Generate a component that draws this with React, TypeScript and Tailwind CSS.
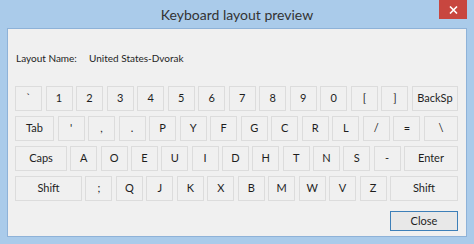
import React from "react";

type K = { label: string; w: number };

const k = (label: string, w = 27): K => ({ label, w });

const rows: K[][] = [
  [..."`1234567890[]".split("").map((c) => k(c)), k("BackSp", 46)],
  [k("Tab", 39), ..."',.PYFGCRL/=".split("").map((c) => k(c)), k("\\", 34)],
  [k("Caps", 52), ..."AOEUIDHTNS-".split("").map((c) => k(c)), k("Enter", 54)],
  [k("Shift", 67), ...";QJKXBMWVZ".split("").map((c) => k(c)), k("Shift", 68)],
];

function Key({ label, w }: K) {
  return (
    <div
      className="h-[25px] flex items-center justify-center border border-[#dcdcdc] bg-[#f0f0f0] text-[11px] text-[#1e1e1e]"
      style={{ width: w }}
    >
      {label}
    </div>
  );
}

export default function App() {
  return (
    <div
      className="w-[474px] h-[244px] bg-[#aacbea] flex flex-col overflow-hidden"
      style={{ fontFamily: 'Lato, "Noto Sans", sans-serif' }}
    >
      <div className="h-[28px] flex items-start shrink-0">
        <div className="flex-1 text-center pt-[4px] text-[14px] text-[#333] pl-[35px]">
          Keyboard layout preview
        </div>
        <div className="w-[28px] h-[19px] bg-[#c8463f] text-white flex items-center justify-center mr-[7px]">
          <svg width="9" height="8" viewBox="0 0 9 8">
            <path d="M1 0.5 L8 7.5 M8 0.5 L1 7.5" stroke="white" strokeWidth="1.6" />
          </svg>
        </div>
      </div>
      <div className="mx-[7px] h-[209px] border border-[#8eb2d8] bg-[#f0f0f0] flex flex-col">
        <div className="flex items-center h-[30px] mt-[14px] px-[8px] text-[10px] text-[#1e1e1e]">
          <span className="w-[73px]">Layout Name:</span>
          <span>United States-Dvorak</span>
        </div>
        <div className="flex flex-col gap-[5px] mt-[13px] px-[7px] w-[457px]">
          {rows.map((r, i) => (
            <div key={i} className="flex justify-between">
              {r.map((key, j) => (
                <Key key={j} {...key} />
              ))}
            </div>
          ))}
        </div>
        <div className="flex justify-end pr-[8px] mt-[10px]">
          <div className="w-[68px] h-[20px] border border-[#3d7fb8] bg-[#e8e8e8] flex items-center justify-center text-[11px] text-[#1e1e1e]">
            Close
          </div>
        </div>
      </div>
    </div>
  );
}
